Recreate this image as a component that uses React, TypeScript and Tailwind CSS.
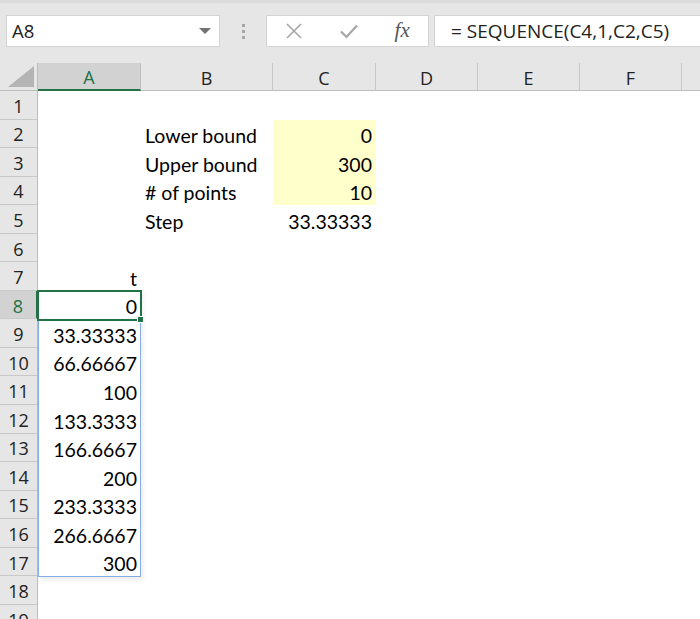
import React from "react";

const ROW_H = "h-[28.56px]";

type Cell = { text: string; align?: "left" | "right"; yellow?: boolean };

const data: Record<number, Record<string, Cell>> = {
  2: { B: { text: "Lower bound" }, C: { text: "0", align: "right", yellow: true } },
  3: { B: { text: "Upper bound" }, C: { text: "300", align: "right", yellow: true } },
  4: { B: { text: "# of points" }, C: { text: "10", align: "right", yellow: true } },
  5: { B: { text: "Step" }, C: { text: "33.33333", align: "right" } },
  7: { A: { text: "t", align: "right" } },
  8: { A: { text: "0", align: "right" } },
  9: { A: { text: "33.33333", align: "right" } },
  10: { A: { text: "66.66667", align: "right" } },
  11: { A: { text: "100", align: "right" } },
  12: { A: { text: "133.3333", align: "right" } },
  13: { A: { text: "166.6667", align: "right" } },
  14: { A: { text: "200", align: "right" } },
  15: { A: { text: "233.3333", align: "right" } },
  16: { A: { text: "266.6667", align: "right" } },
  17: { A: { text: "300", align: "right" } },
};

const cols: { key: string; w: string }[] = [
  { key: "A", w: "w-[103px]" },
  { key: "B", w: "w-[132px]" },
  { key: "C", w: "w-[103px]" },
  { key: "D", w: "w-[102px]" },
  { key: "E", w: "w-[102px]" },
  { key: "F", w: "w-[102px]" },
];

export default function App() {
  const rows = Array.from({ length: 19 }, (_, i) => i + 1);
  return (
    <div className="relative w-[700px] h-[619px] overflow-hidden bg-white" style={{ fontFamily: '"Open Sans", sans-serif' }}>
      {/* Top bar */}
      <div className="h-[63px] bg-[#e6e6e6] flex items-start pt-[15px] pl-[6px] border-t-[3px] border-[#dcdcdc]">
        <div className="w-[214px] h-[32px] bg-white border border-[#d4d4d4] flex items-center justify-between pl-[5px] pr-[8px] -mt-[3px]">
          <span className="text-[18.5px] text-[#222]">A8</span>
          <svg width="12" height="7" viewBox="0 0 12 7"><path d="M0 0h12L6 6z" fill="#737373" /></svg>
        </div>
        <div className="w-[46px] h-[32px] flex flex-col items-center justify-center gap-[3px] -mt-[3px]">
          <div className="w-[3px] h-[3px] bg-[#a6a6a6]" />
          <div className="w-[3px] h-[3px] bg-[#a6a6a6]" />
          <div className="w-[3px] h-[3px] bg-[#a6a6a6]" />
        </div>
        <div className="w-[163px] h-[32px] bg-white border border-[#d4d4d4] flex items-center -mt-[3px]">
          <div className="w-[54px] flex justify-center">
            <svg width="18" height="18" viewBox="0 0 18 18"><path d="M2 2L16 16M16 2L2 16" stroke="#a6a6a6" strokeWidth="1.6" /></svg>
          </div>
          <div className="w-[56px] flex justify-center">
            <svg width="20" height="16" viewBox="0 0 20 16"><path d="M2 8.5L7.5 14L18 2.5" stroke="#a6a6a6" strokeWidth="2.2" fill="none" /></svg>
          </div>
          <div className="w-[52px] flex justify-center">
            <span className="text-[21px] italic text-[#555]" style={{ fontFamily: '"Liberation Serif", serif' }}>fx</span>
          </div>
        </div>
        <div className="ml-[5px] flex-1 h-[32px] bg-white border border-[#d4d4d4] border-r-0 flex items-center pl-[16px] -mt-[3px]">
          <span className="text-[19px] text-[#222] whitespace-nowrap">= SEQUENCE(C4,1,C2,C5)</span>
        </div>
      </div>

      {/* Column headers */}
      <div className="flex h-[28px] bg-[#e6e6e6] border-b border-[#bdbdbd]">
        <div className="w-[38px] shrink-0 border-r border-[#bdbdbd] flex items-end justify-end p-[3px]">
          <svg width="26" height="21" viewBox="0 0 26 21"><path d="M26 0V21H0z" fill="#b4b4b4" /></svg>
        </div>
        {cols.map((c) => (
          <div
            key={c.key}
            className={
              c.key === "A"
                ? `${c.w} shrink-0 bg-[#d2d2d2] border-r border-[#bdbdbd] border-b-2 border-b-[#217346] -mb-px flex items-center justify-center pt-[3px] text-[18px] text-[#217346]`
                : `${c.w} shrink-0 border-r border-[#c8c8c8] flex items-center justify-center pt-[3px] text-[18px] text-[#222]`
            }
          >
            {c.key}
          </div>
        ))}
        <div className="flex-1" />
      </div>

      {/* Rows */}
      <div className="flex flex-col">
        {rows.map((r) => (
          <div key={r} className={`flex ${ROW_H}`}>
            <div
              className={
                r === 8
                  ? "w-[38px] shrink-0 bg-[#d2d2d2] border-r-2 border-[#217346] border-b border-b-[#c8c8c8] flex items-center justify-center pt-[3px] text-[18px] text-[#217346]"
                  : "w-[38px] shrink-0 bg-[#e6e6e6] border-r border-[#bdbdbd] border-b border-b-[#c8c8c8] flex items-center justify-center pt-[3px] text-[18px] text-[#222]"
              }
            >
              {r}
            </div>
            {cols.map((c) => {
              const cell = data[r]?.[c.key];
              return (
                <div
                  key={c.key}
                  className={`${c.w} shrink-0 flex items-end px-[4px] text-[19.5px] leading-[25px] text-black ${
                    cell?.yellow ? "bg-[#ffffcc]" : ""
                  } ${cell?.align === "right" ? "justify-end" : "justify-start"}`}
                  style={{ fontFamily: "Lato, sans-serif" }}
                >
                  {cell?.text}
                </div>
              );
            })}
          </div>
        ))}
      </div>

      {/* Selection overlays */}
      <div className="absolute left-[38px] top-[290px] w-[103px] h-[287px] border border-[#86aee6] shadow-[2px_3px_5px_rgba(0,0,0,0.08)] pointer-events-none" />
      <div className="absolute left-[37px] top-[290px] w-[105px] h-[31px] border-2 border-[#217346] pointer-events-none" />
      <div className="absolute left-[137px] top-[316px] w-[7px] h-[7px] bg-[#217346] border border-white pointer-events-none" />
    </div>
  );
}
